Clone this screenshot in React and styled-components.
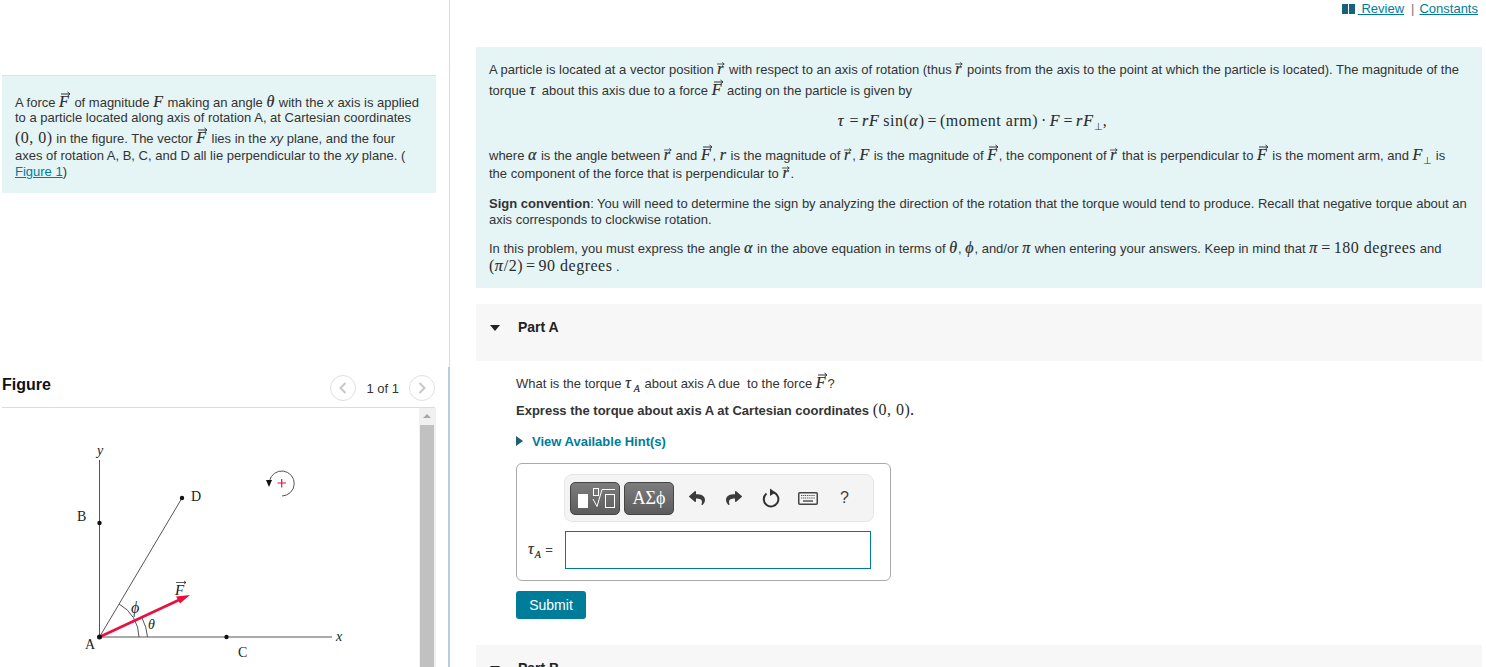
import React from "react";
import styled, { createGlobalStyle } from "styled-components";
import { FaReply, FaShare } from "react-icons/fa";

const teal = "#007c9b";

const GlobalStyle = createGlobalStyle`
  html, body {
    margin: 0;
    height: 667px;
    overflow: hidden;
    background: #fff;
  }
  body {
    font-family: "Liberation Sans", Arial, sans-serif;
    font-size: 13px;
    color: #333;
  }
`;

const Page = styled.div`
  display: flex;
  height: 667px;
  overflow: hidden;
`;

const LeftColumn = styled.div`
  width: 450px;
  flex: none;
  box-sizing: border-box;
  padding: 75px 13px 0 2px;
  border-right: 1px solid #cfdbe5;
  position: relative;
  &::after {
    content: "";
    position: absolute;
    right: -1px;
    top: 367px;
    bottom: 0;
    width: 2px;
    background: #b5cde0;
  }
`;

const RightColumn = styled.div`
  flex: 1;
  min-width: 0;
  padding: 0 4px 0 26px;
`;

const InfoPanel = styled.div`
  background: #e5f5f6;
  box-sizing: border-box;
`;

const IntroPanel = styled(InfoPanel)`
  height: 118px;
  padding: 17px 8px 0 13px;
  border-top: 1px solid #d7e3e5;
`;

const ProblemPanel = styled(InfoPanel)`
  height: 241px;
  padding: 12px 10px 0 13px;
`;

const Line = styled.div`
  height: ${(p) => p.$h || 16}px;
  line-height: ${(p) => p.$h || 16}px;
  margin-top: ${(p) => p.$mt || 0}px;
  white-space: nowrap;
  font-weight: ${(p) => (p.$bold ? 700 : 400)};
`;

const DisplayEquation = styled(Line)`
  text-align: center;
  padding-right: 16px;
`;

const Math = styled.span`
  font-family: "Liberation Serif", "Times New Roman", serif;
  font-size: ${(p) => p.$size || 16}px;
  font-style: ${(p) => (p.$upright ? "normal" : "italic")};
  font-weight: 400;
  letter-spacing: ${(p) => (p.$upright ? 0.5 : 0.9)}px;
  color: #2b2b2b;
  -webkit-text-stroke: ${(p) => (p.$upright ? 0 : 0.2)}px #2b2b2b;
`;

const Tau = styled(Math)`
  letter-spacing: 3px;
`;

const Rel = styled(Math).attrs({ $upright: true })`
  margin: 0 3px;
`;

const Sub = styled.sub`
  font-size: 10px;
  line-height: 0;
`;

const VecWrap = styled.span`
  position: relative;
  display: inline-block;
  line-height: 1;
  margin-right: 1px;
`;

const VecArrow = styled.svg`
  position: absolute;
  left: ${(p) => p.$left}px;
  top: ${(p) => p.$top}px;
  width: ${(p) => p.$w}px;
  height: 6px;
`;

const Vec = ({ children }) => {
  const isR = children === "r";
  return (
    <VecWrap>
      <Math>{children}</Math>
      <VecArrow viewBox="0 0 10 6" preserveAspectRatio="xMaxYMid meet" $left={isR ? 0 : 2} $top={isR ? 0 : -3} $w={isR ? 8 : 10}>
        <path d="M0 3H9M6.5 1L9 3L6.5 5" fill="none" stroke="#333" strokeWidth="1" />
      </VecArrow>
    </VecWrap>
  );
};

const TextLink = styled.a`
  color: ${teal};
  text-decoration: underline;
  cursor: pointer;
`;

const FigureHead = styled.div`
  margin: 174px 1px 0 0;
  height: 40px;
  border-bottom: 1px solid #dcdcdc;
  display: flex;
  justify-content: space-between;
  align-items: flex-start;
`;

const FigureTitle = styled.h2`
  margin: 8px 0 0;
  font-size: 16px;
  line-height: 20px;
  font-weight: 700;
  color: #111;
`;

const Pager = styled.div`
  display: flex;
  align-items: center;
  gap: 10px;
  margin-top: 8px;
`;

const PagerButton = styled.span`
  width: 24px;
  height: 24px;
  border: 1px solid #e0e0e0;
  border-radius: 50%;
  display: flex;
  align-items: center;
  justify-content: center;
`;

const Chevron = ({ flip }) => (
  <svg width="10" height="14" viewBox="0 0 10 14" style={flip ? { transform: "scaleX(-1)" } : undefined}>
    <path d="M7.5 2L2.5 7L7.5 12" fill="none" stroke="#c8c8c8" strokeWidth="2" />
  </svg>
);

const FigureScroll = styled.div`
  height: 260px;
  display: flex;
`;

const Diagram = styled.svg`
  width: 417px;
  height: 260px;
  flex: none;
  font-family: "Liberation Serif", serif;
  font-size: 14px;
  fill: #222;
`;

const ScrollTrack = styled.div`
  width: 17px;
  background: #f1f1f1;
  position: relative;
  padding: 17px 2px 0 1px;
  box-sizing: border-box;
  &::before {
    content: "";
    position: absolute;
    left: 4px;
    top: 6px;
    border-left: 4px solid transparent;
    border-right: 4px solid transparent;
    border-bottom: 4px solid #a8a8a8;
  }
`;

const ScrollThumb = styled.div`
  height: 100%;
  background: #c1c1c1;
`;

const TopLinks = styled.div`
  height: 47px;
  box-sizing: border-box;
  padding: 1px 4px 0 0;
  display: flex;
  justify-content: flex-end;
  align-items: flex-start;
  line-height: 16px;
  gap: 5px;
`;

const Divider = styled.span`
  color: #777;
  margin-left: 2px;
`;

const ReviewLink = styled(TextLink)`
  white-space: pre;
`;

const BookIcon = styled.svg`
  width: 13px;
  height: 10px;
  margin: 3px -2px 0 0;
`;

const PartHeader = styled.div`
  margin-top: ${(p) => p.$mt}px;
  height: 57px;
  background: #f7f7f7;
  display: flex;
  align-items: flex-start;
  padding: 15px 0 0 14px;
  box-sizing: border-box;
  font-size: 14px;
  font-weight: 700;
  line-height: 16px;
  color: #222;
`;

const Caret = styled.span`
  width: 0;
  height: 0;
  margin: 6px 18px 0 0;
  border-left: 5.5px solid transparent;
  border-right: 5.5px solid transparent;
  border-top: 6px solid #222;
`;

const PartBody = styled.div`
  padding: 12px 0 0 40px;
`;

const HintLink = styled.a`
  display: flex;
  align-items: center;
  height: 18px;
  margin-top: 12px;
  color: ${teal};
  font-weight: 700;
  cursor: pointer;
`;

const HintCaret = styled.span`
  border-top: 5.5px solid transparent;
  border-bottom: 5.5px solid transparent;
  border-left: 7px solid #1d5f75;
  margin-right: 9px;
`;

const AnswerBox = styled.div`
  width: 375px;
  height: 118px;
  margin-top: 13px;
  box-sizing: border-box;
  border: 1px solid #aaa;
  border-radius: 6px;
  padding: 10px 0 0 47px;
`;

const Toolbar = styled.div`
  width: 310px;
  height: 48px;
  box-sizing: border-box;
  background: #f4f4f4;
  border: 1px solid #e6e6e6;
  border-radius: 8px;
  display: flex;
  align-items: center;
  padding-left: 5px;
`;

const TemplateButton = styled.span`
  width: 50px;
  height: 33px;
  margin-right: 4px;
  box-sizing: border-box;
  border: 1px solid #454545;
  border-radius: 5px;
  background: linear-gradient(#7d7d7d, #5c5c5c);
  display: flex;
  align-items: center;
  justify-content: center;
  color: #fff;
  font-family: "Liberation Serif", serif;
  font-size: 18px;
`;

const ToolIcon = styled.span`
  width: 37px;
  flex: none;
  display: flex;
  justify-content: center;
  align-items: center;
  color: #3c3c3c;
  font-size: 16px;
`;

const AnswerRow = styled.div`
  display: flex;
  align-items: center;
  margin: 9px 0 0 -47px;
  height: 38px;
`;

const AnswerLabel = styled.label`
  width: 48px;
  box-sizing: border-box;
  padding: 0 0 3px 11px;
  white-space: nowrap;
  color: #444;
`;

const AnswerInput = styled.input`
  width: 306px;
  height: 38px;
  box-sizing: border-box;
  border: 1px solid ${teal};
  background: #fff;
  outline: none;
`;

const SubmitButton = styled.button`
  display: block;
  width: 70px;
  height: 28px;
  margin-top: 10px;
  padding: 0;
  border: 0;
  border-radius: 3px;
  background: ${teal};
  color: #fff;
  font-family: inherit;
  font-size: 14px;
  cursor: pointer;
`;

export default function App() {
  return (
    <Page>
      <GlobalStyle />
      <LeftColumn>
        <IntroPanel>
          <Line $h={17}>
            A force <Vec>F</Vec> of magnitude <Math>F</Math> making an angle <Math>θ</Math> with the <i>x</i> axis is applied
          </Line>
          <Line>to a particle located along axis of rotation A, at Cartesian coordinates</Line>
          <Line $h={24}>
            <Math $upright>(0, 0)</Math> in the figure. The vector <Vec>F</Vec> lies in the <i>xy</i> plane, and the four
          </Line>
          <Line $mt={-2}>
            axes of rotation A, B, C, and D all lie perpendicular to the <i>xy</i> plane. (
          </Line>
          <Line>
            <TextLink>Figure 1</TextLink>)
          </Line>
        </IntroPanel>

        <FigureHead>
          <FigureTitle>Figure</FigureTitle>
          <Pager>
            <PagerButton><Chevron /></PagerButton>
            <span>1 of 1</span>
            <PagerButton><Chevron flip /></PagerButton>
          </Pager>
        </FigureHead>
        <FigureScroll>
          <Diagram viewBox="2 408 417 260">
            <g fill="none" stroke="#555" strokeWidth="1">
              <path d="M99.5 460V637H332" />
              <path d="M99.5 637L182 498" />
              <path d="M119 604A38 38 0 0 1 139 637" />
              <path d="M142 618A48 48 0 0 1 147.5 637" />
              <path d="M282 496A12.5 12.5 0 1 0 269.5 481" />
            </g>
            <path d="M269 487L266 480H272Z" fill="#111" />
            <path d="M277.5 483H286M281.7 479V487.5" stroke="#e8103f" strokeWidth="1.2" />
            <path d="M99.5 637L180 599.5" stroke="#e8103f" strokeWidth="2.6" />
            <path d="M190 595L176 596.5L180 603.5Z" fill="#e8103f" />
            <circle cx="99.5" cy="637" r="2.5" fill="#111" />
            <circle cx="99.5" cy="523" r="2.2" fill="#111" />
            <circle cx="182" cy="498" r="2.2" fill="#111" />
            <circle cx="226.5" cy="637" r="2.2" fill="#111" />
            <text x="97" y="455" fontStyle="italic">y</text>
            <text x="77" y="521">B</text>
            <text x="191" y="501">D</text>
            <text x="85" y="649">A</text>
            <text x="238" y="657">C</text>
            <text x="336" y="641" fontStyle="italic">x</text>
            <text x="175" y="595" fontStyle="italic" fontSize="15">F</text>
            <path d="M176 582.5H186M184 581L186 582.5L184 584" fill="none" stroke="#333" strokeWidth="0.8" />
            <text x="131" y="613" fontStyle="italic" fontSize="16">ϕ</text>
            <text x="148" y="629" fontStyle="italic">θ</text>
          </Diagram>
          <ScrollTrack><ScrollThumb /></ScrollTrack>
        </FigureScroll>
      </LeftColumn>

      <RightColumn>
        <TopLinks>
          <BookIcon viewBox="0 0 13 10">
            <path d="M0 0H6V10H0ZM7 0H13V10H7Z" fill="#17617a" />
          </BookIcon>
          <ReviewLink> Review</ReviewLink>
          <Divider>|</Divider>
          <TextLink>Constants</TextLink>
        </TopLinks>

        <ProblemPanel>
          <Line $h={21}>
            A particle is located at a vector position <Vec>r</Vec> with respect to an axis of rotation (thus <Vec>r</Vec> points from the axis to the point at which the particle is located). The magnitude of the
          </Line>
          <Line $h={19}>
            torque <Tau>τ</Tau> about this axis due to a force <Vec>F</Vec> acting on the particle is given by
          </Line>
          <DisplayEquation $h={20} $mt={12}>
            <Tau>τ</Tau><Rel>=</Rel><Math>rF</Math> <Math $upright>sin(</Math><Math>α</Math><Math $upright>)</Math><Rel>=</Rel><Math $upright>(moment arm)</Math><Rel>·</Rel><Math>F</Math><Rel>=</Rel><Math>rF</Math><Sub>⊥</Sub><Math $upright>,</Math>
          </DisplayEquation>
          <Line $h={20} $mt={14}>
            where <Math>α</Math> is the angle between <Vec>r</Vec> and <Vec>F</Vec>, <Math>r</Math> is the magnitude of <Vec>r</Vec>, <Math>F</Math> is the magnitude of <Vec>F</Vec>, the component of <Vec>r</Vec> that is perpendicular to <Vec>F</Vec> is the moment arm, and <Math>F</Math><Sub>⊥</Sub> is
          </Line>
          <Line $h={18}>
            the component of the force that is perpendicular to <Vec>r</Vec>.
          </Line>
          <Line $mt={13}>
            <b>Sign convention</b>: You will need to determine the sign by analyzing the direction of the rotation that the torque would tend to produce. Recall that negative torque about an
          </Line>
          <Line>axis corresponds to clockwise rotation.</Line>
          <Line $h={18} $mt={11}>
            In this problem, you must express the angle <Math>α</Math> in the above equation in terms of <Math>θ</Math>, <Math>ϕ</Math>, and/or <Math>π</Math> when entering your answers. Keep in mind that <Math>π</Math><Rel>=</Rel><Math $upright>180 degrees</Math> and
          </Line>
          <Line $h={17}>
            <Math $upright>(</Math><Math>π</Math><Math $upright>/2)</Math><Rel>=</Rel><Math $upright>90 degrees</Math> .
          </Line>
        </ProblemPanel>

        <PartHeader $mt={16}>
          <Caret />
          Part A
        </PartHeader>
        <PartBody>
          <Line $h={20}>
            What is the torque <Tau>τ</Tau><Sub><Math $size={10}>A</Math></Sub> about axis A due &nbsp;to the force <Vec>F</Vec>?
          </Line>
          <Line $h={20} $mt={7} $bold>
            Express the torque about axis A at Cartesian coordinates <Math $upright>(0, 0)</Math>.
          </Line>
          <HintLink>
            <HintCaret />
            View Available Hint(s)
          </HintLink>
          <AnswerBox>
            <Toolbar>
              <TemplateButton>
                <svg width="42" height="26" viewBox="0 0 42 26">
                  <rect x="4" y="9" width="10" height="14" fill="#fff" />
                  <g fill="none" stroke="#fff" strokeWidth="1">
                    <rect x="19.5" y="3.5" width="5" height="7" />
                    <path d="M19 14L23 21.5L28 4.5H41" />
                    <rect x="31.5" y="9.5" width="9" height="13" />
                  </g>
                </svg>
              </TemplateButton>
              <TemplateButton>ΑΣϕ</TemplateButton>
              <ToolIcon><FaReply /></ToolIcon>
              <ToolIcon><FaShare /></ToolIcon>
              <ToolIcon>
                <svg width="18" height="20" viewBox="0 0 18 20">
                  <path d="M11.5 4.3A7.3 7.3 0 1 1 4.5 5.5" fill="none" stroke="#333" strokeWidth="2" />
                  <path d="M8 0.5L13.5 4.5L8 8Z" fill="#333" />
                </svg>
              </ToolIcon>
              <ToolIcon>
                <svg width="20" height="13" viewBox="0 0 20 13">
                  <rect x="0.75" y="0.75" width="18.5" height="11.5" rx="1" fill="none" stroke="#444" strokeWidth="1.5" />
                  <path d="M3 3.5H17M3 6H17" stroke="#555" strokeWidth="1.2" strokeDasharray="1.2 0.7" />
                  <path d="M5 9H15" stroke="#555" strokeWidth="1.5" />
                </svg>
              </ToolIcon>
              <ToolIcon>?</ToolIcon>
            </Toolbar>
            <AnswerRow>
              <AnswerLabel>
                <Math>τ</Math><Sub><Math $size={10}>A</Math></Sub> =
              </AnswerLabel>
              <AnswerInput />
            </AnswerRow>
          </AnswerBox>
          <SubmitButton>Submit</SubmitButton>
        </PartBody>
        <PartHeader $mt={26}>
          <Caret />
          Part B
        </PartHeader>
      </RightColumn>
    </Page>
  );
}
